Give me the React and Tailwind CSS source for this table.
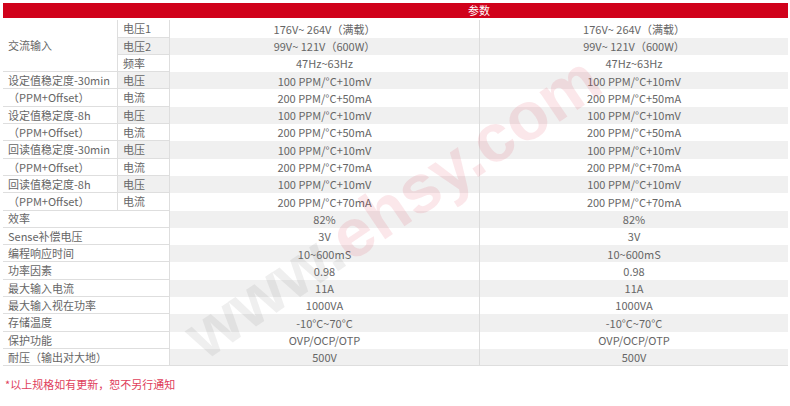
import React from 'react';

const FONT = { fontFamily: '"Noto Sans CJK SC", "Noto Sans", sans-serif' };

const subRows = [
  { label: '交流输入', span: 3, sub: '电压1', v: '176V~ 264V（满载）' },
  { sub: '电压2', v: '99V~ 121V（600W）' },
  { sub: '频率', v: '47Hz~63Hz' },
  { label: '设定值稳定度-30min', sub: '电压', v: '100 PPM/°C+10mV' },
  { label: '（PPM+Offset）', sub: '电流', v: '200 PPM/°C+50mA' },
  { label: '设定值稳定度-8h', sub: '电压', v: '100 PPM/°C+10mV' },
  { label: '（PPM+Offset）', sub: '电流', v: '200 PPM/°C+50mA' },
  { label: '回读值稳定度-30min', sub: '电压', v: '100 PPM/°C+10mV' },
  { label: '（PPM+Offset）', sub: '电流', v: '200 PPM/°C+70mA' },
  { label: '回读值稳定度-8h', sub: '电压', v: '100 PPM/°C+10mV' },
  { label: '（PPM+Offset）', sub: '电流', v: '200 PPM/°C+70mA' },
];

const plainRows = [
  ['效率', '82%'],
  ['Sense补偿电压', '3V'],
  ['编程响应时间', '10~600mS'],
  ['功率因素', '0.98'],
  ['最大输入电流', '11A'],
  ['最大输入视在功率', '1000VA'],
  ['存储温度', '-10°C~70°C'],
  ['保护功能', 'OVP/OCP/OTP'],
  ['耐压（输出对大地）', '500V'],
];

const labelCls = 'flex items-center pl-[5px] bg-white border-b border-[#dedede] border-r border-[#d6d6d6] whitespace-nowrap';

export default function App() {
  return (
    <div className="relative w-[790px] h-[406px] bg-white text-[11px] text-[#666] overflow-hidden" style={FONT}>
      <div className="pt-[3px] pl-[3px]">
        <div className="w-[785px] grid grid-cols-[115px_52px_310px_308px] auto-rows-[17.3px]">
          {/* header */}
          <div className="col-span-4 h-[15px] bg-[#d0021b] grid grid-cols-[167px_1fr] text-white leading-[15px]">
            <div />
            <div className="text-center text-[11px]">参数</div>
          </div>

          {subRows.map((r, i) => {
            const bg = i % 2 === 1 ? 'bg-[#f0f0f0]' : 'bg-white';
            return (
              <React.Fragment key={i}>
                {r.label && (
                  <div
                    className={labelCls}
                    style={r.span ? { gridRow: `span ${r.span}` } : undefined}
                  >
                    {r.label}
                  </div>
                )}
                <div className={`flex items-center pl-[5px] border-b border-[#dedede] border-r border-[#d6d6d6] ${bg}`}>{r.sub}</div>
                <div className={`flex items-center justify-center border-r border-[#dcdcdc] ${bg}`}>{r.v}</div>
                <div className={`flex items-center justify-center ${bg}`}>{r.v}</div>
              </React.Fragment>
            );
          })}

          {plainRows.map(([label, v], i) => {
            const bg = i % 2 === 0 ? 'bg-[#f0f0f0]' : 'bg-white';
            return (
              <React.Fragment key={label}>
                <div className={`col-span-2 ${labelCls}`}>{label}</div>
                <div className={`flex items-center justify-center border-r border-[#dcdcdc] ${bg} ${i === plainRows.length - 1 ? 'border-b border-b-[#dedede]' : ''}`}>{v}</div>
                <div className={`flex items-center justify-center ${bg} ${i === plainRows.length - 1 ? 'border-b border-b-[#dedede]' : ''}`}>{v}</div>
              </React.Fragment>
            );
          })}
        </div>

        <p className="mt-[10px] pl-[2px] text-[11px] text-[#e0405c]">*以上规格如有更新，恕不另行通知</p>
      </div>

      {/* watermark */}
      <div className="pointer-events-none absolute left-[150px] top-[172px] rotate-[-34deg] origin-center whitespace-nowrap text-[68px] font-bold leading-none" style={{ fontFamily: '"Liberation Sans", Arial, sans-serif' }}>
        <span className="text-[rgba(120,120,120,0.12)]">www.</span>
        <span className="text-[rgba(220,60,80,0.12)]">ehsy.com</span>
      </div>
    </div>
  );
}
